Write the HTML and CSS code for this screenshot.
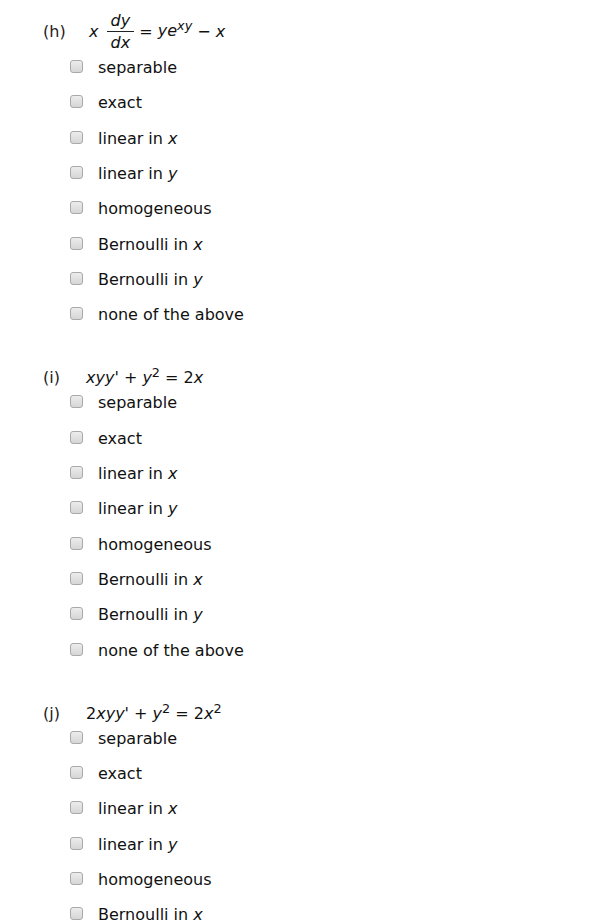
FILE: index.html
```html
<!DOCTYPE html>
<html>
<head>
<meta charset="utf-8">
<link rel="stylesheet" href="styles.css">
</head>
<body>
<div class="page">

  <section class="question">
    <div class="q-head frac-head">
      <span class="q-label">(h)</span>
      <span class="eq eq-frac"><i>x</i> <span class="frac"><span class="num"><i>dy</i></span><span class="den"><i>dx</i></span></span> = <i>ye<sup>xy</sup></i> − <i>x</i></span>
    </div>
    <ul class="options">
      <li><span class="box"></span><span>separable</span></li>
      <li><span class="box"></span><span>exact</span></li>
      <li><span class="box"></span><span>linear in <i>x</i></span></li>
      <li><span class="box"></span><span>linear in <i>y</i></span></li>
      <li><span class="box"></span><span>homogeneous</span></li>
      <li><span class="box"></span><span>Bernoulli in <i>x</i></span></li>
      <li><span class="box"></span><span>Bernoulli in <i>y</i></span></li>
      <li><span class="box"></span><span>none of the above</span></li>
    </ul>
  </section>

  <section class="question">
    <div class="q-head simple">
      <span class="q-label">(i)</span>
      <span class="eq"><i>xyy'</i> + <i>y</i><sup>2</sup> = 2<i>x</i></span>
    </div>
    <ul class="options">
      <li><span class="box"></span><span>separable</span></li>
      <li><span class="box"></span><span>exact</span></li>
      <li><span class="box"></span><span>linear in <i>x</i></span></li>
      <li><span class="box"></span><span>linear in <i>y</i></span></li>
      <li><span class="box"></span><span>homogeneous</span></li>
      <li><span class="box"></span><span>Bernoulli in <i>x</i></span></li>
      <li><span class="box"></span><span>Bernoulli in <i>y</i></span></li>
      <li><span class="box"></span><span>none of the above</span></li>
    </ul>
  </section>

  <section class="question">
    <div class="q-head simple">
      <span class="q-label">(j)</span>
      <span class="eq">2<i>xyy'</i> + <i>y</i><sup>2</sup> = 2<i>x</i><sup>2</sup></span>
    </div>
    <ul class="options">
      <li><span class="box"></span><span>separable</span></li>
      <li><span class="box"></span><span>exact</span></li>
      <li><span class="box"></span><span>linear in <i>x</i></span></li>
      <li><span class="box"></span><span>linear in <i>y</i></span></li>
      <li><span class="box"></span><span>homogeneous</span></li>
      <li><span class="box"></span><span>Bernoulli in <i>x</i></span></li>
      <li><span class="box"></span><span>Bernoulli in <i>y</i></span></li>
      <li><span class="box"></span><span>none of the above</span></li>
    </ul>
  </section>

</div>
</body>
</html>
```

FILE: styles.css
```css
html, body {
  margin: 0;
  padding: 0;
  background: #fff;
}

body {
  font-family: "DejaVu Sans", Verdana, sans-serif;
  font-size: 16px;
  color: #111;
}

.page {
  padding: 13px 0 0 43px;
}

.question {
  margin-bottom: 43px;
}

.q-head {
  display: flex;
  align-items: center;
  height: 40px;
}

.q-head.frac-head {
  box-sizing: border-box;
  padding-bottom: 3px;
}

.q-head.simple {
  height: 20px;
  line-height: 20px;
}

.q-label {
  width: 43px;
  flex: none;
  color: #222;
}

.eq {
  white-space: nowrap;
}

.eq-frac {
  margin-left: 3px;
}

.eq i, .options i {
  font-style: italic;
}

sup {
  font-size: 0.8em;
  line-height: 0;
  vertical-align: 0.5em;
}

.frac {
  display: inline-flex;
  flex-direction: column;
  align-items: stretch;
  text-align: center;
  vertical-align: middle;
  margin: 0 0 0 3px;
  line-height: 16px;
}

.frac .num {
  padding: 0 4px 2px;
  border-bottom: 1px solid #222;
}

.frac .den {
  padding: 3px 4px 0;
}

.options {
  list-style: none;
  margin: 5px 0 0 0;
  padding: 0 0 0 27px;
  display: flex;
  flex-direction: column;
  gap: 15.33px;
}

.options li {
  display: flex;
  align-items: center;
  height: 20px;
  line-height: 20px;
}

.box {
  box-sizing: border-box;
  width: 13px;
  height: 13px;
  margin-right: 15px;
  margin-top: -3px;
  border: 1px solid #a9a9a9;
  border-radius: 3px;
  background: linear-gradient(#ececec, #d6d6d6);
  flex: none;
}
```
